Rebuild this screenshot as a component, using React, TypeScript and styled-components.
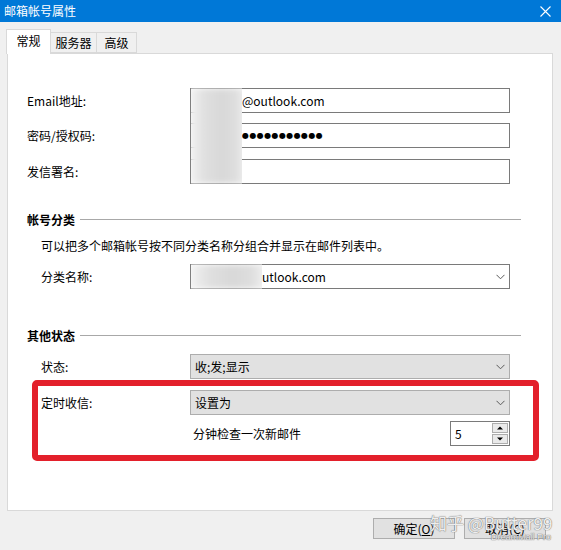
import React from 'react';
import styled, { createGlobalStyle } from 'styled-components';

const Global = createGlobalStyle`
  html, body { margin: 0; padding: 0; background: #F0F0F0; }
  body {
    font-family: "Noto Sans CJK SC", "Microsoft YaHei", sans-serif;
    font-size: 12px;
    color: #000;
  }
  * { box-sizing: border-box; }
`;

const Dialog = styled.div`
  position: relative;
  width: 561px;
  height: 550px;
  background: #F0F0F0;
  display: flex;
  flex-direction: column;
  overflow: hidden;
`;

const TitleBar = styled.div`
  height: 22px;
  background: #0078D7;
  color: #fff;
  display: flex;
  align-items: center;
  justify-content: space-between;
  padding: 0 10px 0 4px;
  font-size: 12px;
  line-height: 22px;
`;

const CloseIcon = () => (
  <svg width="11" height="11" viewBox="0 0 11 11">
    <path d="M0.5 0.5 L10.5 10.5 M10.5 0.5 L0.5 10.5" stroke="#fff" strokeWidth="1.1" fill="none" />
  </svg>
);

const Body = styled.div`
  padding: 7px 0 0 6px;
  display: flex;
  flex-direction: column;
`;

const TabStrip = styled.div`
  height: 24px;
  display: flex;
  align-items: flex-end;
  position: relative;
  z-index: 1;
`;

const Tab = styled.div<{ $w: number; $active?: boolean }>`
  width: ${p => p.$w}px;
  height: ${p => (p.$active ? 25 : 21)}px;
  margin-bottom: ${p => (p.$active ? -1 : 0)}px;
  background: ${p => (p.$active ? '#fff' : '#F0F0F0')};
  border: 1px solid #D9D9D9;
  border-bottom: ${p => (p.$active ? 'none' : '1px solid #D9D9D9')};
  border-left: ${p => (p.$active ? '1px solid #D9D9D9' : 'none')};
  display: flex;
  align-items: center;
  justify-content: center;
  font-size: 12px;
  padding-bottom: ${p => (p.$active ? 3 : 0)}px;
`;

const Panel = styled.div`
  position: relative;
  margin-left: 1px;
  width: 546px;
  height: 458px;
  background: #fff;
  border: 1px solid #D9D9D9;
  padding: 34px 0 0 19px;
  display: flex;
  flex-direction: column;
`;

const Row = styled.div<{ $label: number; $mt?: number; $h?: number }>`
  display: grid;
  grid-template-columns: ${p => p.$label}px 320px;
  align-items: center;
  height: ${p => p.$h ?? 25}px;
  margin-top: ${p => p.$mt ?? 0}px;
`;

const Label = styled.div`
  font-size: 12px;
  white-space: nowrap;
`;

const TextBox = styled.div<{ $pad?: number }>`
  height: 25px;
  border: 1px solid #7A7A7A;
  background: #fff;
  display: flex;
  align-items: center;
  padding-left: ${p => p.$pad ?? 3}px;
  font-size: 12px;
  white-space: nowrap;
`;

const Dots = styled.span`
  font-family: "DejaVu Sans", sans-serif;
  font-size: 8px;
  letter-spacing: 0.4px;
`;

const Combo = styled.div<{ $gray?: boolean; $pad?: number }>`
  height: 25px;
  border: 1px solid ${p => (p.$gray ? '#ADADAD' : '#7A7A7A')};
  background: ${p => (p.$gray ? '#E1E1E1' : '#fff')};
  display: flex;
  align-items: center;
  justify-content: space-between;
  padding-left: ${p => p.$pad ?? 4}px;
  padding-right: 4px;
  font-size: 12px;
  white-space: nowrap;
`;

const Chevron = () => (
  <svg width="9" height="6" viewBox="0 0 9 6">
    <polyline points="0.5,0.8 4.5,4.8 8.5,0.8" stroke="#5A5A5A" strokeWidth="1" fill="none" />
  </svg>
);

const Heading = styled.div<{ $mt: number }>`
  width: 494px;
  margin-top: ${p => p.$mt}px;
  height: 16px;
  display: flex;
  align-items: center;
  gap: 5px;
  font-weight: bold;
  font-size: 12px;
  &::after {
    content: '';
    flex: 1;
    height: 1px;
    background: #A8A8A8;
  }
`;

const Indented = styled.div`
  padding-left: 14px;
  display: flex;
  flex-direction: column;
`;

const Note = styled.div<{ $mt: number }>`
  margin-top: ${p => p.$mt}px;
  height: 16px;
  line-height: 16px;
  font-size: 12px;
`;

const Highlight = styled.div`
  margin-left: 5px;
  margin-top: 1px;
  width: 507px;
  height: 81px;
  border: 6px solid #E3202B;
  border-radius: 5px;
  padding: 4px 0 0 3px;
  display: flex;
  flex-direction: column;
`;

const SpinLine = styled.div`
  display: flex;
  align-items: center;
  justify-content: space-between;
  padding-left: 3px;
  height: 25px;
`;

const Spinner = styled.div`
  width: 60px;
  height: 25px;
  border: 1px solid #7A7A7A;
  display: flex;
  align-items: center;
  justify-content: space-between;
  padding: 1px 1px 1px 4px;
  font-size: 12px;
`;

const SpinButtons = styled.div`
  display: flex;
  flex-direction: column;
  gap: 1px;
`;

const SpinButton = styled.div`
  width: 16px;
  height: 10px;
  border: 1px solid #ADADAD;
  background: #EAEAEA;
  display: flex;
  align-items: center;
  justify-content: center;
`;

const Arrow = ({ up }: { up?: boolean }) => (
  <svg width="6" height="4" viewBox="0 0 6 4">
    <polygon points={up ? '0,3.5 3,0.5 6,3.5' : '0,0.5 3,3.5 6,0.5'} fill="#000" />
  </svg>
);

const Redaction = styled.div<{ $x: number; $y: number; $w: number; $h: number }>`
  position: absolute;
  left: ${p => p.$x}px;
  top: ${p => p.$y}px;
  width: ${p => p.$w}px;
  height: ${p => p.$h}px;
  border-left: 1px solid #7F7F7F;
  overflow: hidden;
  &::before {
    content: '';
    position: absolute;
    inset: 0 -6px 0 -2px;
    background: linear-gradient(to right, #f4f4f4 0%, #e0e0e0 25%, #d8d8d8 55%, #dedede 80%, #f6f6f6 100%);
    filter: blur(3px);
  }
`;

const ButtonRow = styled.div`
  display: flex;
  justify-content: flex-end;
  gap: 9px;
  padding-right: 15px;
  margin-top: 7px;
`;

const Button = styled.div`
  width: 82px;
  height: 21px;
  border: 1px solid #ADADAD;
  background: #E1E1E1;
  display: flex;
  align-items: center;
  justify-content: center;
  font-size: 12px;
  u { text-decoration: underline; }
`;

const Watermark = styled.div`
  position: absolute;
  left: 430px;
  top: 513px;
  font-size: 17px;
  color: rgba(255, 255, 255, 0.9);
  text-shadow: 0 0 1px #777, 0 0 1px #777;
  white-space: nowrap;
  line-height: 20px;
`;

const WatermarkSub = styled.div`
  position: absolute;
  left: 491px;
  top: 532px;
  font-family: "Liberation Sans", sans-serif;
  font-size: 9px;
  color: rgba(255, 255, 255, 0.9);
  text-shadow: 0 0 1px #666, 0 0 1px #666;
  white-space: nowrap;
`;

export default function App() {
  return (
    <>
      <Global />
      <Dialog>
        <TitleBar>
          <span>邮箱帐号属性</span>
          <CloseIcon />
        </TitleBar>
        <Body>
          <TabStrip>
            <Tab $w={45} $active>常规</Tab>
            <Tab $w={46}>服务器</Tab>
            <Tab $w={40}>高级</Tab>
          </TabStrip>
          <Panel>
            <Row $label={163}>
              <Label>Email地址:</Label>
              <TextBox $pad={51}>@outlook.com</TextBox>
            </Row>
            <Row $label={163} $mt={10}>
              <Label>密码/授权码:</Label>
              <TextBox $pad={51}><Dots>●●●●●●●●●●●</Dots></TextBox>
            </Row>
            <Row $label={163} $mt={11}>
              <Label>发信署名:</Label>
              <TextBox />
            </Row>

            <Heading $mt={27}>帐号分类</Heading>
            <Indented>
              <Note $mt={11}>可以把多个邮箱帐号按不同分类名称分组合并显示在邮件列表中。</Note>
              <Row $label={149} $mt={10}>
                <Label>分类名称:</Label>
                <Combo $pad={71}>
                  <span>utlook.com</span>
                  <Chevron />
                </Combo>
              </Row>
            </Indented>

            <Heading $mt={38}>其他状态</Heading>
            <Indented>
              <Row $label={149} $mt={11}>
                <Label>状态:</Label>
                <Combo $gray>
                  <span>收;发;显示</span>
                  <Chevron />
                </Combo>
              </Row>
            </Indented>
            <Highlight>
              <Row $label={149}>
                <Label>定时收信:</Label>
                <Combo $gray>
                  <span>设置为</span>
                  <Chevron />
                </Combo>
              </Row>
              <Row $label={149} $mt={6}>
                <span />
                <SpinLine>
                  <span>分钟检查一次新邮件</span>
                  <Spinner>
                    <span>5</span>
                    <SpinButtons>
                      <SpinButton><Arrow up /></SpinButton>
                      <SpinButton><Arrow /></SpinButton>
                    </SpinButtons>
                  </Spinner>
                </SpinLine>
              </Row>
            </Highlight>

            <Redaction $x={182} $y={34} $w={52} $h={96} />
            <Redaction $x={182} $y={210} $w={72} $h={25} />
          </Panel>
          <ButtonRow>
            <Button>确定(<u>O</u>)</Button>
            <Button>取消(<u>C</u>)</Button>
          </ButtonRow>
        </Body>
        <Watermark>知乎 @Butter99</Watermark>
        <WatermarkSub>DreamMail Pro</WatermarkSub>
      </Dialog>
    </>
  );
}
